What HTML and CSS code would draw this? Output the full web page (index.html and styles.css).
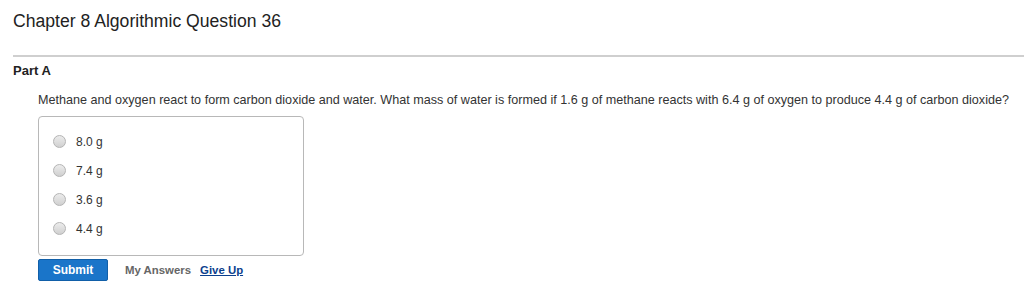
FILE: index.html
```html
<!DOCTYPE html>
<html lang="en">
<head>
    <meta charset="UTF-8">
    <title>Chapter 8 Algorithmic Question 36</title>
    <link rel="stylesheet" href="styles.css">
</head>
<body>
    <div id="page">
        <h1 class="title">Chapter 8 Algorithmic Question 36</h1>
        <hr class="divider">
        <h2 class="part">Part A</h2>
        <div class="part-body">
            <p class="question">Methane and oxygen react to form carbon dioxide and water. What mass of water is formed if 1.6 g of methane reacts with 6.4 g of oxygen to produce 4.4 g of carbon dioxide?</p>
            <div class="choices">
                <label class="choice"><span class="radio"></span>8.0 g</label>
                <label class="choice"><span class="radio"></span>7.4 g</label>
                <label class="choice"><span class="radio"></span>3.6 g</label>
                <label class="choice"><span class="radio"></span>4.4 g</label>
            </div>
            <div class="actions">
                <button class="submit-btn">Submit</button>
                <span class="my-answers">My Answers</span>
                <a class="give-up" href="#">Give Up</a>
            </div>
        </div>
    </div>
</body>
</html>
```

FILE: styles.css
```css
body {
    font-family: "Liberation Sans", Arial, sans-serif;
    background-color: #fff;
    color: #333;
    margin: 0;
}

#page {
    padding: 10px 0 0 13px;
}

.title {
    font-size: 17.6px;
    font-weight: normal;
    color: #222;
    margin: 0;
    line-height: 22px;
}

.divider {
    border: none;
    border-top: 2px solid #cfcfcf;
    margin: 23px 0 0 0;
}

.part {
    font-size: 13px;
    font-weight: bold;
    color: #222;
    margin: 7px 0 0 0;
    line-height: 14px;
}

.part-body {
    padding-left: 25px;
}

.question {
    font-size: 12.6px;
    margin: 15px 0 0 0;
    line-height: 14px;
}

.choices {
    width: 264px;
    margin-top: 9px;
    border: 1px solid #b8b8b8;
    border-radius: 4px;
    padding: 10px 0 12px 0;
}

.choice {
    display: flex;
    align-items: center;
    height: 29px;
    padding-left: 14px;
    font-size: 12px;
    cursor: pointer;
}

.radio {
    width: 11px;
    height: 11px;
    border: 1px solid #b4b4b4;
    border-radius: 50%;
    background: linear-gradient(#ececec, #d0d0d0);
    margin-right: 10px;
}

.actions {
    display: flex;
    align-items: center;
    margin-top: 3px;
    font-size: 11.4px;
    font-weight: bold;
}

.submit-btn {
    width: 70px;
    height: 22px;
    background-color: #1a75c9;
    border: 1px solid #115fa8;
    border-radius: 2px;
    color: #fff;
    font-family: inherit;
    font-size: 12px;
    font-weight: bold;
    cursor: pointer;
}

.my-answers {
    color: #666;
    margin-left: 17px;
}

.give-up {
    color: #0b3f8e;
    margin-left: 9px;
}
```
